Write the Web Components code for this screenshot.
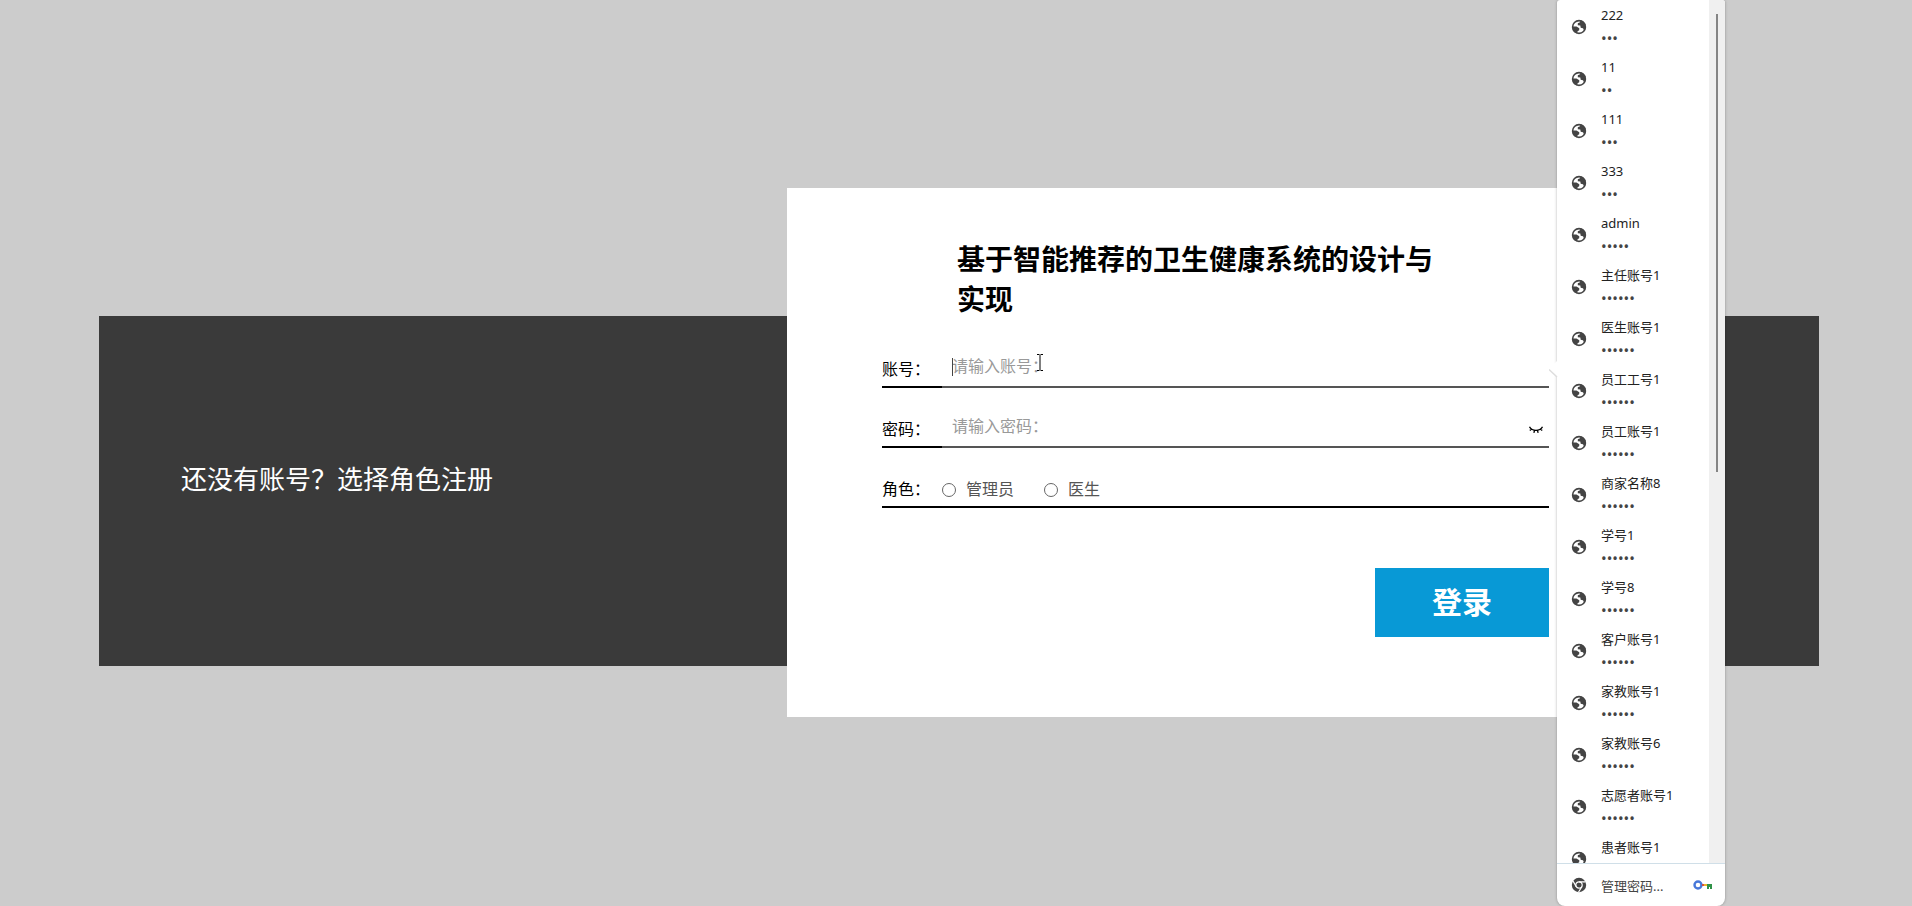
<!DOCTYPE html>
<html lang="zh-CN">
<head>
<meta charset="utf-8">
<title>登录</title>
<style>
    html, body {
        margin: 0;
        height: 100%;
    }
    body {
        font-family: "Noto Sans CJK SC", sans-serif;
        font-size: 16px;
        color: #000;
        background-color: #ccc;
    }
</style>
</head>
<body>
<login-page>
    <register-link slot="register">还没有账号？选择角色注册</register-link>
    <login-card slot="card" heading="基于智能推荐的卫生健康系统的设计与实现"></login-card>
    <password-popup slot="popup"></password-popup>
</login-page>

<script>
class LoginPage extends HTMLElement {
    constructor() {
        super();
        this.attachShadow({mode: "open"});
    }

    static get styles() {
        return /* css */`
        :host {
            display: grid;
            position: relative;
            box-sizing: border-box;
            min-height: 100vh;
            padding-bottom: 1px;
            overflow: hidden;
            grid-template-columns: 99fr 688fr 857fr 175fr 93fr;
            grid-template-rows: 1fr 128px auto 51px 1fr;
        }
        .band {
            grid-area: 3 / 2 / 4 / 5;
            background-color: #3a3a3a;
        }
        .register {
            grid-area: 3 / 2 / 4 / 3;
            display: flex;
            align-items: center;
            padding: 0 0 26px 82px;
        }
        .card {
            grid-area: 2 / 3 / 5 / 4;
        }
        `;
    }

    connectedCallback() {
        this.shadowRoot.innerHTML = /* html */`
        <style>${LoginPage.styles}</style>
        <div class="band"></div>
        <div class="register"><slot name="register"></slot></div>
        <main class="card"><slot name="card"></slot></main>
        <slot name="popup"></slot>`;
    }
}

class RegisterLink extends HTMLElement {
    constructor() {
        super();
        this.attachShadow({mode: "open"});
    }

    static get styles() {
        return /* css */`
        :host {
            display: block;
        }
        a {
            color: #fff;
            font-size: 26px;
            line-height: 40px;
            text-decoration: none;
        }
        `;
    }

    connectedCallback() {
        this.shadowRoot.innerHTML = /* html */`
        <style>${RegisterLink.styles}</style>
        <a href="#register"><slot></slot></a>`;
    }
}

class FormRow extends HTMLElement {
    constructor() {
        super();
        this.attachShadow({mode: "open"});
    }

    static get styles() {
        return /* css */`
        :host {
            display: flex;
            align-items: flex-end;
            height: 60px;
        }
        .label {
            box-sizing: border-box;
            width: 60px;
            height: 36px;
            line-height: 32px;
            border-bottom: 2px solid #000;
        }
        .field {
            position: relative;
            flex: 1;
            display: flex;
            align-items: center;
            box-sizing: border-box;
            height: 42px;
            border-bottom: 2px solid var(--line-color, #555);
        }
        input.text {
            flex: 1;
            box-sizing: border-box;
            min-width: 0;
            height: 40px;
            padding: 0 10px 2px;
            border: 0;
            outline: 0;
            background: none;
            font: inherit;
            color: #333;
        }
        input.text::placeholder {
            color: #999;
        }
        .caret {
            position: absolute;
            top: 12px;
            left: 10px;
            width: 1px;
            height: 18px;
            background-color: #444;
        }
        .pointer {
            position: absolute;
            top: 8px;
            left: 94px;
        }
        .eye {
            display: flex;
            padding: 8px 6px 0 0;
            border: 0;
            background: none;
        }
        .roles {
            display: flex;
            gap: 30px;
            padding-top: 4px;
        }
        .role {
            display: flex;
            align-items: center;
            gap: 10px;
            color: #555;
            line-height: 34px;
        }
        .role input {
            appearance: none;
            box-sizing: border-box;
            width: 14px;
            height: 14px;
            margin: 4px 0 0;
            border: 1px solid #666;
            border-radius: 50%;
        }
        `;
    }

    get field() {
        const type = this.getAttribute("type");
        const label = this.getAttribute("label");
        if (type === "radio") {
            const roles = this.getAttribute("options").split(",")
                .map(role => `<label class="role"><input type="radio" name="role" value="${role}">${role}</label>`)
                .join("");
            return `<div class="roles" role="radiogroup" aria-labelledby="label">${roles}</div>`;
        }
        const eye = `<button class="eye" type="button" aria-label="显示密码">
            <svg width="14" height="8" viewBox="0 0 14 8" fill="none" stroke="#000" stroke-width="1.3">
                <path d="M.5 .8C3.500 5.500 10.500 5.500 13.500 .8M2.600 3 .8 4.600M5.500 4.300 4.900 6.800M8.500 4.300 9.100 6.800M11.400 3 13.200 4.600"/>
            </svg>
        </button>`;
        const cursors = `<span class="caret"></span>
            <svg class="pointer" width="8" height="17" viewBox="0 0 8 17" fill="none" stroke="#000">
                <path d="M1 .5H3.500M4.500 .5H7M4 1V16M1 16.500H3.500M4.500 16.500H7"/>
            </svg>`;
        return `<input class="text" id="field" type="${type}" placeholder="请输入${label}：">
            ${type === "password" ? eye : ""}
            ${this.hasAttribute("active") ? cursors : ""}`;
    }

    connectedCallback() {
        const label = this.getAttribute("label");
        const tag = this.getAttribute("type") === "radio" ? `span id="label"` : `label for="field"`;
        this.shadowRoot.innerHTML = /* html */`
        <style>${FormRow.styles}</style>
        <${tag} class="label">${label}：</${tag.split(" ")[0]}>
        <div class="field">${this.field}</div>`;
    }
}

class LoginCard extends HTMLElement {
    constructor() {
        super();
        this.attachShadow({mode: "open"});
    }

    static get styles() {
        return /* css */`
        :host {
            display: block;
            box-sizing: border-box;
            min-height: 100%;
            padding: 50px 95px 80px;
            background-color: #fff;
        }
        h1 {
            width: 72%;
            margin: 0 0 10px 75px;
            font-size: 28px;
            line-height: 40px;
        }
        .last {
            --line-color: #000;
        }
        .actions {
            display: flex;
            justify-content: flex-end;
            margin-top: 60px;
        }
        .submit {
            padding: 10px 57px 14px;
            border: 0;
            color: #fff;
            background-color: #0899d6;
            font: bold 30px/45px "Noto Sans CJK SC", sans-serif;
        }
        `;
    }

    connectedCallback() {
        this.shadowRoot.innerHTML = /* html */`
        <style>${LoginCard.styles}</style>
        <h1>${this.getAttribute("heading")}</h1>
        <form>
            <form-row label="账号" type="text" active></form-row>
            <form-row label="密码" type="password"></form-row>
            <form-row class="last" label="角色" type="radio" options="管理员,医生"></form-row>
            <div class="actions"><button class="submit" type="button">登录</button></div>
        </form>`;
    }
}

class AccountItem extends HTMLElement {
    constructor() {
        super();
        this.attachShadow({mode: "open"});
    }

    static get styles() {
        return /* css */`
        :host {
            display: flex;
            align-items: center;
            flex: none;
            gap: 14px;
            height: 52px;
            padding-left: 14px;
        }
        .name, .dots {
            display: block;
            height: 22px;
            white-space: nowrap;
        }
        .name {
            color: #222;
            font-size: 13px;
            line-height: 20px;
        }
        .dots {
            color: #444;
            font-size: 15px;
            line-height: 22px;
        }
        `;
    }

    connectedCallback() {
        this.shadowRoot.innerHTML = /* html */`
        <style>${AccountItem.styles}</style>
        <svg width="16" height="16" viewBox="0 0 16 16" fill="#444">
            <circle cx="8" cy="8" r="6.400" fill="none" stroke="#444" stroke-width="1.600"/>
            <path d="M9.500 1.500 9 3.300 6.800 4.200V6.200L9.300 6.600 9.700 8.800 12 9.200 13 11.200 14.600 9V5L12 2Z"/>
            <path d="M1.300 7.400 5.500 7.600 8.300 9.300 8.200 11.300 6.600 12.200 6.200 14.600 3 13Z"/>
        </svg>
        <div>
            <span class="name">${this.getAttribute("name")}</span>
            <span class="dots">${"•".repeat(this.getAttribute("length"))}</span>
        </div>`;
    }
}

class PasswordPopup extends HTMLElement {
    constructor() {
        super();
        this.attachShadow({mode: "open"});
        this.accounts = [
            ["222", 3], ["11", 2], ["111", 3], ["333", 3], ["admin", 5],
            ["主任账号1", 6], ["医生账号1", 6], ["员工工号1", 6], ["员工账号1", 6],
            ["商家名称8", 6], ["学号1", 6], ["学号8", 6], ["客户账号1", 6],
            ["家教账号1", 6], ["家教账号6", 6], ["志愿者账号1", 6], ["患者账号1", 0]
        ];
    }

    static get styles() {
        return /* css */`
        :host {
            position: absolute;
            top: 0;
            bottom: 0;
            right: 187px;
            width: 168px;
            display: flex;
            flex-direction: column;
            border-radius: 3px 3px 8px 8px;
            background-color: #fff;
            box-shadow: 0 0 3px rgba(0, 0, 0, .3);
            font-family: "Noto Sans", "Noto Sans CJK SC", sans-serif;
        }
        .arrow {
            position: absolute;
            top: 360px;
            left: -8px;
        }
        .body {
            flex: 1;
            min-height: 0;
            display: flex;
        }
        .list {
            flex: 1;
            display: flex;
            flex-direction: column;
            overflow: hidden;
            padding-top: 1px;
        }
        .track {
            width: 16px;
            padding-top: 14px;
            box-sizing: border-box;
            border-top-right-radius: 3px;
            background-color: #f0f0f0;
        }
        .thumb {
            width: 2px;
            height: 54%;
            margin: 0 auto;
            background-color: #858585;
        }
        .footer {
            display: flex;
            align-items: center;
            height: 42px;
            padding: 0 12px 0 14px;
            border: 0;
            border-top: 1px solid #d0dfe8;
            background: none;
            box-sizing: content-box;
            color: #444;
            font: inherit;
            font-size: 13px;
        }
        .footer span {
            flex: 1;
            margin-left: 14px;
            text-align: left;
        }
        `;
    }

    getTemplateAccounts() {
        return this.accounts
            .map(([name, length]) => `<account-item name="${name}" length="${length}"></account-item>`)
            .join("");
    }

    connectedCallback() {
        this.shadowRoot.innerHTML = /* html */`
        <style>${PasswordPopup.styles}</style>
        <svg class="arrow" width="9" height="18" viewBox="0 0 9 18">
            <path d="M9 0 0 9 9 18Z" fill="#fff"/>
            <path d="M0 9.500 8 17" stroke="#ddd" stroke-width="1.500" fill="none"/>
        </svg>
        <div class="body">
            <div class="list">${this.getTemplateAccounts()}</div>
            <div class="track"><div class="thumb"></div></div>
        </div>
        <button class="footer" type="button">
            <svg width="16" height="16" viewBox="0 0 16 16">
                <circle cx="8" cy="8" r="7.200" fill="#444"/>
                <circle cx="8" cy="8" r="3.200" fill="none" stroke="#fff" stroke-width="1.200"/>
                <path d="M8 4.800H14.500M5.200 9.600 2 4M10.800 9.600 7.500 15.200" stroke="#fff" stroke-width="1.200"/>
            </svg>
            <span>管理密码...</span>
            <svg width="20" height="10" viewBox="0 0 20 10">
                <circle cx="5" cy="5" r="3.500" fill="none" stroke="#4777d9" stroke-width="2.400"/>
                <path d="M9 4h3v2H9Z" fill="#d85040"/>
                <path d="M11 4h3v2h-3Z" fill="#f0b429"/>
                <path d="M14 4h5v5h-2V7h-1v2h-2Z" fill="#2f9248"/>
            </svg>
        </button>`;
    }
}

customElements.define("login-page", LoginPage);
customElements.define("register-link", RegisterLink);
customElements.define("form-row", FormRow);
customElements.define("login-card", LoginCard);
customElements.define("account-item", AccountItem);
customElements.define("password-popup", PasswordPopup);
</script>
</body>
</html>
